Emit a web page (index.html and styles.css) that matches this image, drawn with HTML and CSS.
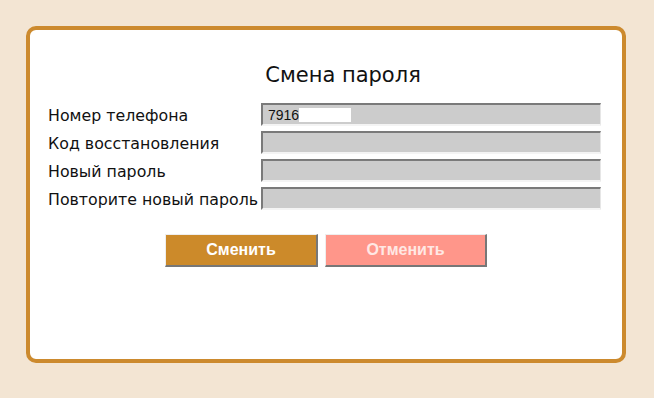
FILE: index.html
```html
<!DOCTYPE html>
<html lang="ru">
<head>
    <meta charset="UTF-8">
    <title>Смена пароля</title>
    <link rel="stylesheet" href="styles.css">
</head>
<body>
    <div class="box">
        <h2 class="title">Смена пароля</h2>
        <div class="form">
            <label class="lbl">Номер телефона</label>
            <div class="field"><span class="val">7916</span><span class="mask"></span></div>
            <label class="lbl">Код восстановления</label>
            <div class="field"></div>
            <label class="lbl">Новый пароль</label>
            <div class="field"></div>
            <label class="lbl">Повторите новый пароль</label>
            <div class="field"></div>
        </div>
        <div class="buttons">
            <button class="btn btn_ok">Сменить</button>
            <button class="btn btn_cancel">Отменить</button>
        </div>
    </div>
</body>
</html>
```

FILE: styles.css
```css
body{
    margin: 0;
    background-color: #f3e5d3;
    font-family: "DejaVu Sans", Verdana, sans-serif;
}
.box{
    width: 592px;
    height: 329px;
    margin: 26px 0 0 26px;
    background-color: #fff;
    border: 4px solid #cc8a2e;
    border-radius: 10px;
}
.title{
    margin: 33px 0 0 0;
    padding-left: 34px;
    height: 34px;
    font-size: 21px;
    font-weight: normal;
    text-align: center;
    color: #111;
}
.form{
    display: grid;
    grid-template-columns: 213px 340px;
    grid-auto-rows: 23px;
    row-gap: 5px;
    margin-left: 18px;
    margin-top: 6px;
}
.lbl{
    font-size: 15.8px;
    color: #111;
    line-height: 25px;
}
.field{
    height: 19px;
    background-color: #cccccc;
    border-style: solid;
    border-width: 2px 1px 2px 2px;
    border-color: #7a7a7a #e6e6e6 #f4f4f4 #7a7a7a;
    display: flex;
    align-items: center;
    padding-left: 5px;
}
.val{
    font-family: "Liberation Sans", Arial, sans-serif;
    font-size: 14px;
    color: #111;
}
.mask{
    width: 52px;
    height: 14px;
    background-color: #fff;
}
.buttons{
    display: flex;
    justify-content: center;
    gap: 7px;
    margin-top: 24px;
}
.btn{
    height: 33px;
    border-style: solid;
    border-width: 1px 2px 2px 1px;
    border-color: #eee #777 #777 #eee;
    font-family: "Liberation Sans", Arial, sans-serif;
    font-weight: bold;
    font-size: 16px;
    color: #fff;
    padding: 0;
}
.btn_ok{
    width: 153px;
    background-color: #cc8a2a;
}
.btn_cancel{
    width: 162px;
    background-color: #ff968a;
    color: #ffe8e4;
}
```
